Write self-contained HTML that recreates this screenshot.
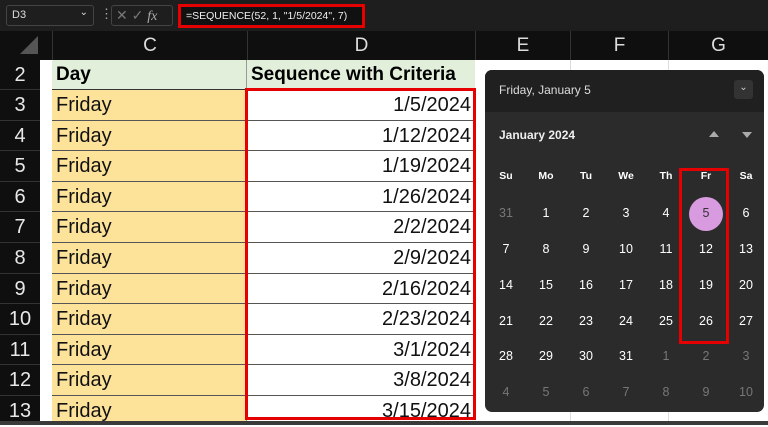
<!DOCTYPE html>
<html><head><style>
*{margin:0;padding:0;box-sizing:border-box}
body{width:768px;height:425px;overflow:hidden;background:#fff;font-family:"Liberation Sans",sans-serif;position:relative}
.a{position:absolute}
.rh{position:absolute;left:0;width:40px;background:#0f0f0f;color:#e8e8e8;font-size:20px;text-align:center;border-bottom:1px solid #333}
.c{position:absolute;left:52px;width:195px;background:#fde29a;border-bottom:1px solid #555;border-right:1px solid #999;font-size:20px;padding-left:4px;color:#111}
.d{position:absolute;left:247px;width:228px;background:#fff;border-bottom:1px solid #555;font-size:20px;text-align:right;padding-right:4px;color:#111}
.n{position:absolute;width:30px;text-align:center;font-size:12.5px;color:#fff;transform:translate(-15px,-8px)}
.g{color:#777}
</style></head><body>
<div class="a" style="left:0;top:0;width:768px;height:31px;background:#1e1e1e"></div>
<div class="a" style="left:6px;top:5px;width:88px;height:21px;border:1px solid #444;border-radius:3px;background:#1e1e1e;color:#ddd;font-size:11px;padding:3px 5px">D3<span style="position:absolute;right:5px;top:1px;font-size:10px">&#8964;</span></div>
<div class="a" style="left:100px;top:6px;color:#aaa;font-size:13px">&#8942;</div>
<div class="a" style="left:111px;top:5px;width:62px;height:21px;border:1px solid #444;border-radius:3px;color:#777;font-size:14px;padding:1px 4px">✕ ✓ <i style="font-family:'Liberation Serif',serif;color:#aaa">fx</i></div>
<div class="a" style="left:178px;top:4px;width:187px;height:24px;border:3px solid #e60000;background:#111;color:#eee;font-size:10.5px;padding:3px 5px;white-space:nowrap;overflow:hidden">=SEQUENCE(52, 1, "1/5/2024", 7)</div>
<div class="a" style="left:0;top:31px;width:768px;height:29px;background:#0f0f0f"></div>
<div class="a" style="left:20px;top:36px;width:0;height:0;border-left:18px solid transparent;border-bottom:18px solid #555"></div>
<div class="a" style="left:52px;top:31px;width:195px;height:29px;border-left:1px solid #333;color:#ddd;font-size:19px;text-align:center;line-height:29px">C</div>
<div class="a" style="left:247px;top:31px;width:228px;height:29px;border-left:1px solid #333;color:#ddd;font-size:19px;text-align:center;line-height:29px">D</div>
<div class="a" style="left:475px;top:31px;width:95px;height:29px;border-left:1px solid #333;color:#ddd;font-size:19px;text-align:center;line-height:29px">E</div>
<div class="a" style="left:570px;top:31px;width:98px;height:29px;border-left:1px solid #333;color:#ddd;font-size:19px;text-align:center;line-height:29px">F</div>
<div class="a" style="left:668px;top:31px;width:100px;height:29px;border-left:1px solid #333;color:#ddd;font-size:19px;text-align:center;line-height:29px">G</div>
<div class="a" style="left:570px;top:60px;width:1px;height:365px;background:#ddd"></div>
<div class="a" style="left:668px;top:60px;width:1px;height:365px;background:#ddd"></div>
<div class="rh" style="top:60px;height:30px;line-height:30px">2</div>
<div class="a" style="left:52px;top:60px;width:195px;height:30px;background:#e2efda;border-bottom:1px solid #333;border-right:1px solid #999;font-size:19px;font-weight:bold;line-height:29px;padding-left:4px">Day</div>
<div class="a" style="left:247px;top:60px;width:228px;height:30px;background:#e2efda;border-bottom:1px solid #333;font-size:19px;font-weight:bold;line-height:29px;padding-left:4px;white-space:nowrap">Sequence with Criteria</div>
<div class="rh" style="top:90px;height:31px;line-height:31px">3</div><div class="c" style="top:90px;height:31px;line-height:31px">Friday</div><div class="d" style="top:90px;height:31px;line-height:31px">1/5/2024</div>
<div class="rh" style="top:121px;height:30px;line-height:30px">4</div><div class="c" style="top:121px;height:30px;line-height:30px">Friday</div><div class="d" style="top:121px;height:30px;line-height:30px">1/12/2024</div>
<div class="rh" style="top:151px;height:31px;line-height:31px">5</div><div class="c" style="top:151px;height:31px;line-height:31px">Friday</div><div class="d" style="top:151px;height:31px;line-height:31px">1/19/2024</div>
<div class="rh" style="top:182px;height:30px;line-height:30px">6</div><div class="c" style="top:182px;height:30px;line-height:30px">Friday</div><div class="d" style="top:182px;height:30px;line-height:30px">1/26/2024</div>
<div class="rh" style="top:212px;height:31px;line-height:31px">7</div><div class="c" style="top:212px;height:31px;line-height:31px">Friday</div><div class="d" style="top:212px;height:31px;line-height:31px">2/2/2024</div>
<div class="rh" style="top:243px;height:31px;line-height:31px">8</div><div class="c" style="top:243px;height:31px;line-height:31px">Friday</div><div class="d" style="top:243px;height:31px;line-height:31px">2/9/2024</div>
<div class="rh" style="top:274px;height:30px;line-height:30px">9</div><div class="c" style="top:274px;height:30px;line-height:30px">Friday</div><div class="d" style="top:274px;height:30px;line-height:30px">2/16/2024</div>
<div class="rh" style="top:304px;height:31px;line-height:31px">10</div><div class="c" style="top:304px;height:31px;line-height:31px">Friday</div><div class="d" style="top:304px;height:31px;line-height:31px">2/23/2024</div>
<div class="rh" style="top:335px;height:30px;line-height:30px">11</div><div class="c" style="top:335px;height:30px;line-height:30px">Friday</div><div class="d" style="top:335px;height:30px;line-height:30px">3/1/2024</div>
<div class="rh" style="top:365px;height:31px;line-height:31px">12</div><div class="c" style="top:365px;height:31px;line-height:31px">Friday</div><div class="d" style="top:365px;height:31px;line-height:31px">3/8/2024</div>
<div class="rh" style="top:396px;height:29px;line-height:31px">13</div><div class="c" style="top:396px;height:29px;line-height:31px">Friday</div><div class="d" style="top:396px;height:29px;line-height:31px">3/15/2024</div>
<div class="a" style="left:0;top:421px;width:768px;height:4px;background:#3a3a3a"></div>
<div class="a" style="left:245px;top:88px;width:231px;height:332px;border:3px solid #e60000"></div>
<div class="a" style="left:485px;top:70px;width:279px;height:342px;background:#2b2b2b;border-radius:7px;overflow:hidden">
 <div class="a" style="left:0;top:0;width:279px;height:42px;background:#202020"></div>
 <div class="a" style="left:14px;top:13px;color:#ddd;font-size:12px">Friday, January 5</div>
 <div class="a" style="left:249px;top:10px;width:19px;height:19px;background:#333;border-radius:3px;color:#ccc;font-size:10px;text-align:center;line-height:15px">&#8964;</div>
 <div class="a" style="left:14px;top:58px;color:#eee;font-size:12px;font-weight:bold">January 2024</div>
 <div class="a" style="left:224px;top:61px;width:0;height:0;border-left:5px solid transparent;border-right:5px solid transparent;border-bottom:6px solid #aaa"></div>
 <div class="a" style="left:257px;top:62px;width:0;height:0;border-left:5px solid transparent;border-right:5px solid transparent;border-top:6px solid #aaa"></div>
 <div class="a" style="left:204px;top:127px;width:34px;height:34px;border-radius:50%;background:#d99be0"></div>
</div>
<div style="position:absolute;left:0;top:0;font-weight:bold">
<div class="n" style="left:506px;top:178px;font-size:10.5px">Su</div><div class="n" style="left:546px;top:178px;font-size:10.5px">Mo</div><div class="n" style="left:586px;top:178px;font-size:10.5px">Tu</div><div class="n" style="left:626px;top:178px;font-size:10.5px">We</div><div class="n" style="left:666px;top:178px;font-size:10.5px">Th</div><div class="n" style="left:706px;top:178px;font-size:10.5px">Fr</div><div class="n" style="left:746px;top:178px;font-size:10.5px">Sa</div>
</div>
<div>
<div class="n g" style="left:506px;top:214px">31</div><div class="n" style="left:546px;top:214px">1</div><div class="n" style="left:586px;top:214px">2</div><div class="n" style="left:626px;top:214px">3</div><div class="n" style="left:666px;top:214px">4</div><div class="n" style="left:706px;top:214px;color:#333">5</div><div class="n" style="left:746px;top:214px">6</div>
<div class="n" style="left:506px;top:250px">7</div><div class="n" style="left:546px;top:250px">8</div><div class="n" style="left:586px;top:250px">9</div><div class="n" style="left:626px;top:250px">10</div><div class="n" style="left:666px;top:250px">11</div><div class="n" style="left:706px;top:250px">12</div><div class="n" style="left:746px;top:250px">13</div>
<div class="n" style="left:506px;top:286px">14</div><div class="n" style="left:546px;top:286px">15</div><div class="n" style="left:586px;top:286px">16</div><div class="n" style="left:626px;top:286px">17</div><div class="n" style="left:666px;top:286px">18</div><div class="n" style="left:706px;top:286px">19</div><div class="n" style="left:746px;top:286px">20</div>
<div class="n" style="left:506px;top:322px">21</div><div class="n" style="left:546px;top:322px">22</div><div class="n" style="left:586px;top:322px">23</div><div class="n" style="left:626px;top:322px">24</div><div class="n" style="left:666px;top:322px">25</div><div class="n" style="left:706px;top:322px">26</div><div class="n" style="left:746px;top:322px">27</div>
<div class="n" style="left:506px;top:357px">28</div><div class="n" style="left:546px;top:357px">29</div><div class="n" style="left:586px;top:357px">30</div><div class="n" style="left:626px;top:357px">31</div><div class="n g" style="left:666px;top:357px">1</div><div class="n g" style="left:706px;top:357px">2</div><div class="n g" style="left:746px;top:357px">3</div>
<div class="n g" style="left:506px;top:393px">4</div><div class="n g" style="left:546px;top:393px">5</div><div class="n g" style="left:586px;top:393px">6</div><div class="n g" style="left:626px;top:393px">7</div><div class="n g" style="left:666px;top:393px">8</div><div class="n g" style="left:706px;top:393px">9</div><div class="n g" style="left:746px;top:393px">10</div>
</div>
<div class="a" style="left:679px;top:168px;width:50px;height:176px;border:3px solid #e60000"></div>
</body></html>
